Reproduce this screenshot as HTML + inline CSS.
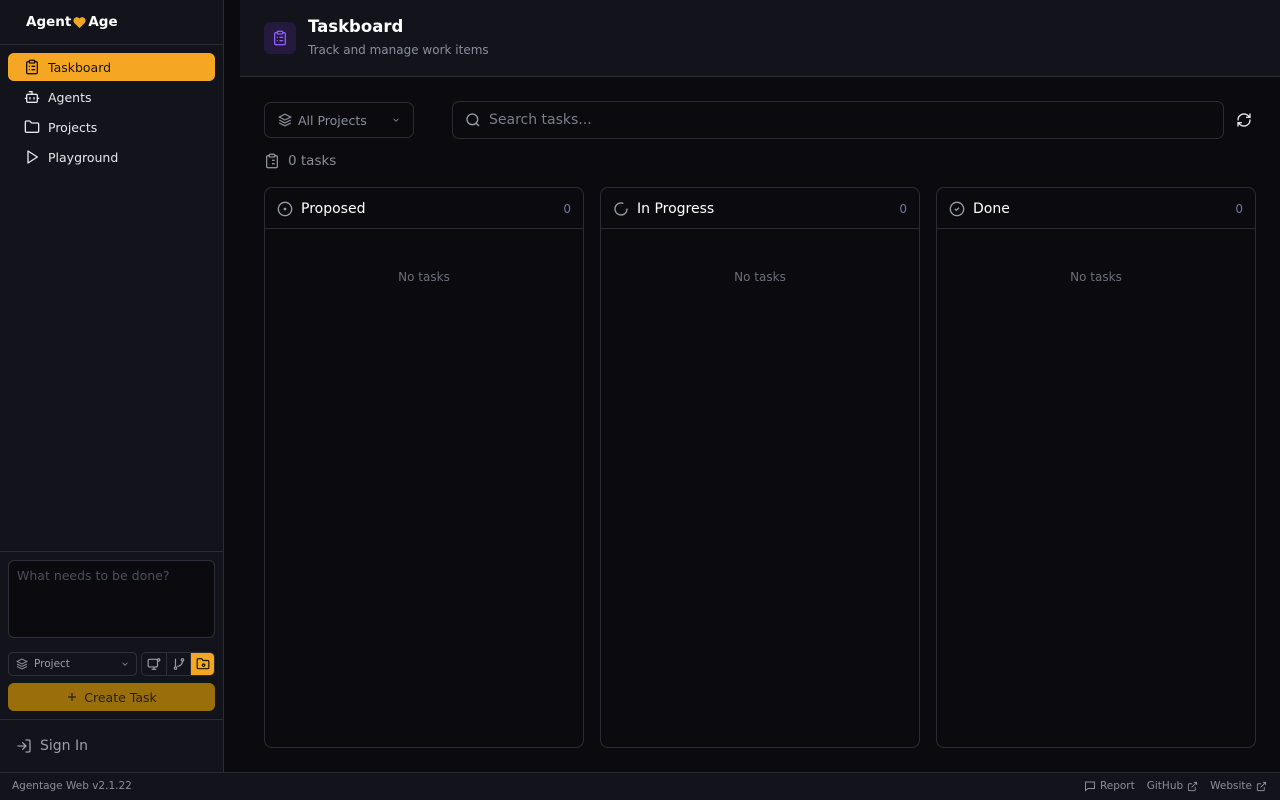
<!DOCTYPE html>
<html><head><meta charset="utf-8"><style>
*{box-sizing:border-box;margin:0;padding:0}
body{width:1280px;height:800px;overflow:hidden;background:#0b0b0f;font-family:"DejaVu Sans","Liberation Sans",sans-serif;color:#e5e7eb;position:relative}
svg{display:block}
.sb{position:absolute;left:0;top:0;width:224px;height:772px;background:#13141b;border-right:1px solid #2a2b33}
.logo{height:45px;border-bottom:1px solid #2a2b33;font-weight:bold;font-size:13.5px;color:#fff;padding:14px 0 0 26px;display:flex;gap:1px}
.nav{position:absolute;left:8px;width:207px;height:28px;border-radius:6px;display:flex;align-items:center;padding-left:16px;gap:8px;font-size:12.5px;color:#e5e7eb}
.nav.act{background:#f5a623;color:#1a1406}
.ta{position:absolute;left:8px;top:560px;width:207px;height:78px;border:1px solid #2e2f38;border-radius:6px;background:#0b0b0f;font-size:12.5px;color:#4b4e5a;padding:7px 8px}
.main-h{position:absolute;left:240px;top:0;width:1040px;height:77px;background:#13141b;border-bottom:1px solid #2a2b33}
.col{position:absolute;top:187px;width:320px;height:561px;border:1px solid #2a2b33;border-radius:8px}
.col .h{height:41px;border-bottom:1px solid #2a2b33;display:flex;align-items:center;padding:1px 12px 0;gap:8px;font-size:14px;color:#fff}
.col .n{margin-left:auto;font-size:12px;color:#6b7a99}
.col .e{text-align:center;font-size:12px;color:#6b6e7a;margin-top:41px}
.ft{position:absolute;left:0;top:772px;width:1280px;height:28px;background:#13141b;border-top:1px solid #2a2b33;font-size:10.5px;color:#8a8d99}
</style></head><body>
<div class="sb">
 <div class="logo">Agent<svg width="15" height="15" viewBox="0 0 24 24" style="margin-top:1px"><path d="M12 21l-8.5-8.5A5 5 0 0 1 12 5.5a5 5 0 0 1 8.5 7z" fill="#f5a623"/></svg>Age</div>
 <div class="nav act" style="top:53px"><svg width="16" height="16" viewBox="0 0 24 24" fill="none" stroke="#1a1406" stroke-width="2" stroke-linecap="round"><rect x="8" y="2" width="8" height="4" rx="1"/><path d="M16 4h2a2 2 0 0 1 2 2v14a2 2 0 0 1-2 2H6a2 2 0 0 1-2-2V6a2 2 0 0 1 2-2h2M12 11h4M12 16h4M8 11h.01M8 16h.01"/></svg>Taskboard</div>
 <div class="nav" style="top:83px"><svg width="16" height="16" viewBox="0 0 24 24" fill="none" stroke="#e5e7eb" stroke-width="2" stroke-linecap="round"><path d="M12 8V4H8"/><rect x="4" y="8" width="16" height="12" rx="2"/><path d="M2 14h2M20 14h2M15 13v2M9 13v2"/></svg>Agents</div>
 <div class="nav" style="top:113px"><svg width="16" height="16" viewBox="0 0 24 24" fill="none" stroke="#e5e7eb" stroke-width="2" stroke-linejoin="round"><path d="M20 20a2 2 0 0 0 2-2V8a2 2 0 0 0-2-2h-7.9a2 2 0 0 1-1.7-.9l-.8-1.2A2 2 0 0 0 7.9 3H4a2 2 0 0 0-2 2v13a2 2 0 0 0 2 2z"/></svg>Projects</div>
 <div class="nav" style="top:143px"><svg width="16" height="16" viewBox="0 0 24 24" fill="none" stroke="#e5e7eb" stroke-width="2" stroke-linejoin="round"><path d="M6 3l14 9-14 9z"/></svg>Playground</div>
 <div style="position:absolute;left:0;top:551px;width:223px;border-top:1px solid #2a2b33"></div>
 <div class="ta">What needs to be done?</div>
 <div style="position:absolute;left:8px;top:652px;width:129px;height:24px;border:1px solid #2e2f38;border-radius:5px;display:flex;align-items:center;padding-left:7px;gap:6px;font-size:10.5px;color:#9a9da8"><svg width="12" height="12" viewBox="0 0 24 24" fill="none" stroke="#8a8d99" stroke-width="2"><path d="M12 2 2 7l10 5 10-5zM2 12l10 5 10-5M2 17l10 5 10-5"/></svg>Project<svg style="margin-left:auto;margin-right:6px" width="10" height="10" viewBox="0 0 24 24" fill="none" stroke="#8a8d99" stroke-width="2"><path d="m6 9 6 6 6-6"/></svg></div>
 <div style="position:absolute;left:141px;top:652px;width:74px;height:24px;border:1px solid #2e2f38;border-radius:5px;display:flex;overflow:hidden">
  <div style="width:25px;border-right:1px solid #2e2f38;display:flex;align-items:center;justify-content:center"><svg width="14" height="14" viewBox="0 0 24 24" fill="none" stroke="#9a9da8" stroke-width="2"><rect x="2" y="4" width="16" height="13" rx="2"/><path d="M8 21h8M12 17v4"/><circle cx="20" cy="5" r="2"/></svg></div>
  <div style="width:24px;border-right:1px solid #2e2f38;display:flex;align-items:center;justify-content:center"><svg width="14" height="14" viewBox="0 0 24 24" fill="none" stroke="#9a9da8" stroke-width="2"><circle cx="6" cy="19" r="2"/><circle cx="18" cy="5" r="2"/><path d="M6 3v14M18 7a9 9 0 0 1-9 9"/></svg></div>
  <div style="flex:1;background:#f5a623;display:flex;align-items:center;justify-content:center"><svg width="14" height="14" viewBox="0 0 24 24" fill="none" stroke="#1a1406" stroke-width="2"><path d="M20 20a2 2 0 0 0 2-2V8a2 2 0 0 0-2-2h-8l-2-3H4a2 2 0 0 0-2 2v13a2 2 0 0 0 2 2z"/><circle cx="13" cy="14" r="2"/></svg></div>
 </div>
 <div style="position:absolute;left:8px;top:683px;width:207px;height:28px;border-radius:6px;background:#9a6e0a;display:flex;align-items:center;justify-content:center;gap:6px;font-size:12.5px;color:#2a2008"><svg width="12" height="12" viewBox="0 0 24 24" fill="none" stroke="#2a2008" stroke-width="2.5"><path d="M12 4v16M4 12h16"/></svg>Create Task</div>
 <div style="position:absolute;left:0;top:719px;width:223px;border-top:1px solid #2a2b33"></div>
 <div style="position:absolute;left:16px;top:738px;display:flex;align-items:center;gap:8px;font-size:14px;color:#9a9da8"><svg width="16" height="16" viewBox="0 0 24 24" fill="none" stroke="#9a9da8" stroke-width="2" stroke-linecap="round"><path d="M15 3h4a2 2 0 0 1 2 2v14a2 2 0 0 1-2 2h-4M10 17l5-5-5-5M15 12H3"/></svg>Sign In</div>
</div>
<div class="main-h">
 <div style="position:absolute;left:24px;top:22px;width:32px;height:32px;border-radius:6px;background:#231a3d;display:flex;align-items:center;justify-content:center"><svg width="16" height="16" viewBox="0 0 24 24" fill="none" stroke="#8b5cf6" stroke-width="2" stroke-linecap="round"><rect x="8" y="2" width="8" height="4" rx="1"/><path d="M16 4h2a2 2 0 0 1 2 2v14a2 2 0 0 1-2 2H6a2 2 0 0 1-2-2V6a2 2 0 0 1 2-2h2M12 11h4M12 16h4M8 11h.01M8 16h.01"/></svg></div>
 <div style="position:absolute;left:68px;top:17px;font-size:16.5px;font-weight:bold;color:#fff">Taskboard</div>
 <div style="position:absolute;left:68px;top:43px;font-size:12px;color:#8a8d99">Track and manage work items</div>
</div>
<div style="position:absolute;left:264px;top:102px;width:150px;height:36px;border:1px solid #2a2b33;border-radius:7px;display:flex;align-items:center;padding-left:13px;gap:6px;font-size:12.5px;color:#8a8d99"><svg width="14" height="14" viewBox="0 0 24 24" fill="none" stroke="#8a8d99" stroke-width="2"><path d="M12 2 2 7l10 5 10-5zM2 12l10 5 10-5M2 17l10 5 10-5"/></svg>All Projects<svg style="margin-left:auto;margin-right:12px" width="10" height="10" viewBox="0 0 24 24" fill="none" stroke="#8a8d99" stroke-width="2"><path d="m6 9 6 6 6-6"/></svg></div>
<div style="position:absolute;left:452px;top:101px;width:772px;height:38px;border:1px solid #2a2b33;border-radius:7px;display:flex;align-items:center;padding-left:12px;gap:8px;font-size:14px;color:#7a7d88"><svg width="16" height="16" viewBox="0 0 24 24" fill="none" stroke="#9a9da8" stroke-width="2"><circle cx="11" cy="11" r="8"/><path d="m21 21-4.3-4.3"/></svg>Search tasks...</div>
<svg style="position:absolute;left:1236px;top:112px" width="16" height="16" viewBox="0 0 24 24" fill="none" stroke="#e5e7eb" stroke-width="2" stroke-linecap="round"><path d="M3 12a9 9 0 0 1 15-6.7L21 8M21 3v5h-5M21 12a9 9 0 0 1-15 6.7L3 16M8 16H3v5"/></svg>
<div style="position:absolute;left:264px;top:153px;display:flex;align-items:center;gap:8px;font-size:13.5px;color:#8a8d99"><svg width="16" height="16" viewBox="0 0 24 24" fill="none" stroke="#8a8d99" stroke-width="2"><rect x="8" y="2" width="8" height="4" rx="1"/><path d="M16 4h2a2 2 0 0 1 2 2v14a2 2 0 0 1-2 2H6a2 2 0 0 1-2-2V6a2 2 0 0 1 2-2h2M12 11h4M12 16h4M8 11h.01M8 16h.01"/></svg>0 tasks</div>
<div class="col" style="left:264px"><div class="h"><svg width="16" height="16" viewBox="0 0 24 24" fill="none" stroke="#9a9da8" stroke-width="2"><circle cx="12" cy="12" r="10"/><circle cx="12" cy="12" r="1" fill="#9a9da8"/></svg>Proposed<span class="n">0</span></div><div class="e">No tasks</div></div>
<div class="col" style="left:600px"><div class="h"><svg width="16" height="16" viewBox="0 0 24 24" fill="none" stroke="#9a9da8" stroke-width="2" stroke-linecap="round"><path d="M21 12a9 9 0 1 1-6.2-8.6"/></svg>In Progress<span class="n">0</span></div><div class="e">No tasks</div></div>
<div class="col" style="left:936px"><div class="h"><svg width="16" height="16" viewBox="0 0 24 24" fill="none" stroke="#9a9da8" stroke-width="2"><circle cx="12" cy="12" r="10"/><path d="m9 12 2 2 4-4"/></svg>Done<span class="n">0</span></div><div class="e">No tasks</div></div>
<div class="ft">
 <span style="position:absolute;left:12px;top:7px">Agentage Web v2.1.22</span>
 <span style="position:absolute;right:13px;top:7px;display:flex;gap:12px;align-items:center">
  <span style="display:flex;gap:4px;align-items:center"><svg width="12" height="12" viewBox="0 0 24 24" fill="none" stroke="#8a8d99" stroke-width="2"><path d="M3 4h18v13H8l-5 4z"/></svg>Report</span>
  <span style="display:flex;gap:4px;align-items:center">GitHub<svg width="11" height="11" viewBox="0 0 24 24" fill="none" stroke="#8a8d99" stroke-width="2"><path d="M15 3h6v6M10 14 21 3M18 13v6a2 2 0 0 1-2 2H5a2 2 0 0 1-2-2V8a2 2 0 0 1 2-2h6"/></svg></span>
  <span style="display:flex;gap:4px;align-items:center">Website<svg width="11" height="11" viewBox="0 0 24 24" fill="none" stroke="#8a8d99" stroke-width="2"><path d="M15 3h6v6M10 14 21 3M18 13v6a2 2 0 0 1-2 2H5a2 2 0 0 1-2-2V8a2 2 0 0 1 2-2h6"/></svg></span>
 </span>
</div>
</body></html>
